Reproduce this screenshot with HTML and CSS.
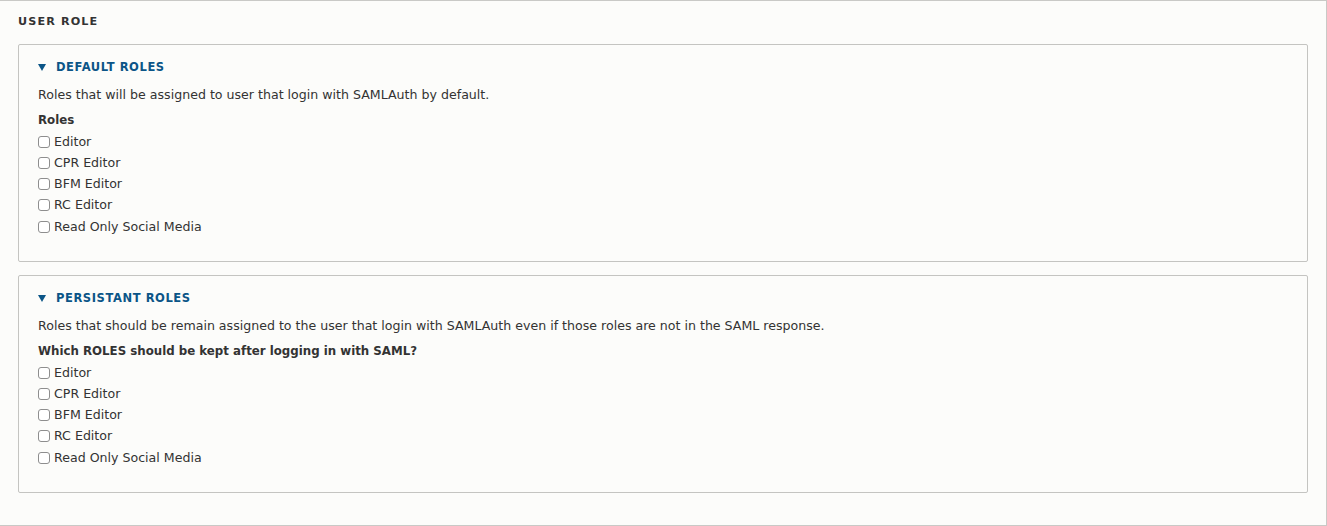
FILE: index.html
```html
<!DOCTYPE html>
<html>
<head>
<meta charset="utf-8">
<link rel="stylesheet" href="styles.css">
</head>
<body>
<div class="outer">
  <div class="outer-title">User role</div>
  <div class="box">
    <div class="legend"><span class="tri"></span>Default roles</div>
    <div class="desc">Roles that will be assigned to user that login with SAMLAuth by default.</div>
    <div class="label">Roles</div>
    <div class="checks">
      <label class="row"><span class="cb"></span>Editor</label>
      <label class="row"><span class="cb"></span>CPR Editor</label>
      <label class="row"><span class="cb"></span>BFM Editor</label>
      <label class="row"><span class="cb"></span>RC Editor</label>
      <label class="row"><span class="cb"></span>Read Only Social Media</label>
    </div>
  </div>
  <div class="box">
    <div class="legend"><span class="tri"></span>Persistant roles</div>
    <div class="desc">Roles that should be remain assigned to the user that login with SAMLAuth even if those roles are not in the SAML response.</div>
    <div class="label">Which ROLES should be kept after logging in with SAML?</div>
    <div class="checks">
      <label class="row"><span class="cb"></span>Editor</label>
      <label class="row"><span class="cb"></span>CPR Editor</label>
      <label class="row"><span class="cb"></span>BFM Editor</label>
      <label class="row"><span class="cb"></span>RC Editor</label>
      <label class="row"><span class="cb"></span>Read Only Social Media</label>
    </div>
  </div>
</div>
</body>
</html>
```
FILE: styles.css
```css
html, body {
  margin: 0;
  padding: 0;
  background: #ffffff;
}
body {
  font-family: "DejaVu Sans", "Noto Sans", sans-serif;
  font-size: 12.6px;
  color: #333;
}
.outer {
  box-sizing: border-box;
  width: 1328px;
  height: 526px;
  margin-left: -1px;
  border: 1px solid #c9c9c6;
  background: #fcfcfa;
  padding: 13px 18px 32px 18px;
  display: flex;
  flex-direction: column;
  gap: 13px;
}
.outer-title {
  font-weight: bold;
  font-size: 11.2px;
  letter-spacing: 0.1em;
  text-transform: uppercase;
  line-height: 16px;
  color: #333;
  margin-bottom: 1px;
}
.box {
  border: 1px solid #c4c4c1;
  border-radius: 2px;
  background: #fcfcfa;
  padding: 15px 19px 23px 19px;
  flex: 1;
}
.legend {
  display: flex;
  align-items: center;
  font-weight: bold;
  font-size: 11.5px;
  letter-spacing: 0.05em;
  text-transform: uppercase;
  line-height: 14px;
  color: #0b5587;
}
.tri {
  width: 0;
  height: 0;
  border-left: 4px solid transparent;
  border-right: 4px solid transparent;
  border-top: 7px solid #0b5587;
  margin-right: 10px;
}
.desc {
  margin-top: 12px;
  line-height: 18px;
  color: #333;
}
.label {
  margin-top: 7px;
  line-height: 18px;
  font-size: 11.8px;
  font-weight: bold;
  color: #333;
}
.checks {
  margin-top: 2px;
  display: flex;
  flex-direction: column;
}
.row {
  display: flex;
  align-items: center;
  height: 21.25px;
  line-height: 18px;
  color: #333;
}
.cb {
  box-sizing: border-box;
  width: 12px;
  height: 12px;
  border: 1px solid #8e8e8e;
  border-radius: 3px;
  background: #fff;
  margin-right: 4px;
}
```
